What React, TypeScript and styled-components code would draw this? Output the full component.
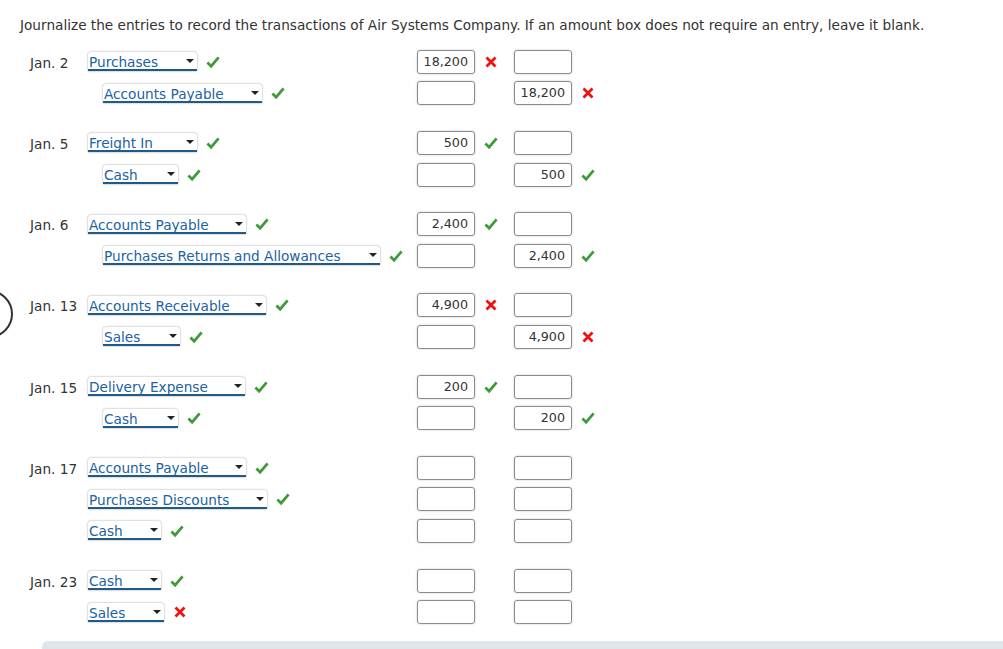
import React, { FC } from 'react';
import styled, { createGlobalStyle } from 'styled-components';

const GlobalStyle = createGlobalStyle`
	html, body {
		margin: 0;
		padding: 0;
		background: #fff;
		font-family: "DejaVu Sans", Verdana, sans-serif;
		color: #333;
		overflow: hidden;
	}
`;

const Page = styled.div`
	position: relative;
	width: 1003px;
	height: 649px;
	overflow: hidden;
	padding-top: 16px;
	box-sizing: border-box;
`;

const Instruction = styled.div`
	padding-left: 20px;
	font-size: 13.65px;
	line-height: 18px;
	color: #333;
`;

const Journal = styled.div`
	margin-top: 12px;
	padding-left: 30px;
`;

const Group = styled.div`
	margin-bottom: 18px;
`;

const Row = styled.div`
	display: grid;
	grid-template-columns: 58px 329px 97px 1fr;
	align-items: center;
	height: 31.6px;
`;

const DateCell = styled.div`
	font-size: 13.65px;
	color: #333;
	padding-top: 2px;
`;

const Cell = styled.div`
	display: flex;
	align-items: center;
`;

const Select = styled.div<{ $w: number; $indent: boolean }>`
	position: relative;
	width: ${(p) => p.$w}px;
	margin-left: ${(p) => (p.$indent ? 15 : 0)}px;
	height: 17px;
	background: #fff;
	border-radius: 3px 3px 0 0;
	box-shadow: 0 0 2px rgba(0, 0, 0, 0.45);
	border-bottom: 2.5px solid #1f5b8a;
	color: #2062a5;
	font-size: 13.65px;
	line-height: 20px;
	padding-left: 1px;
	box-sizing: content-box;
	white-space: nowrap;
	overflow: hidden;

	&:after {
		content: '';
		position: absolute;
		right: 3px;
		top: 7px;
		border-left: 4px solid transparent;
		border-right: 4px solid transparent;
		border-top: 4px solid #222;
	}
`;

const Amount = styled.div`
	width: 56px;
	height: 22px;
	border: 1px solid #8c8c8c;
	border-radius: 3px;
	box-shadow: 0 0 2px rgba(0, 0, 0, 0.25);
	font-size: 12.7px;
	line-height: 22px;
	text-align: right;
	color: #333;
	box-sizing: content-box;

	span {
		padding-right: 6px;
	}
`;

const MarkBox = styled.span`
	display: inline-flex;
	margin-left: 9px;
	width: 14px;
	height: 14px;
	align-items: center;
	justify-content: center;
`;

const BottomBar = styled.div`
	margin-left: 42px;
	margin-top: -5px;
	height: 20px;
	background: #dfe5e9;
	border-radius: 6px 0 0 0;
`;

const Circle = styled.div`
	position: absolute;
	left: -35px;
	top: 290px;
	width: 44px;
	height: 44px;
	border: 2.5px solid #333;
	border-radius: 50%;
`;

type MarkKind = 'ok' | 'x' | undefined;

const Mark: FC<{ kind: MarkKind }> = ({ kind }) => {
	if (!kind) return null;
	if (kind === 'ok')
		return (
			<MarkBox>
				<svg width="15" height="14" viewBox="0 0 15 14">
					<path d="M1.5 7.5 L5.5 11.5 L13.5 2" fill="none" stroke="#3f9a3a" strokeWidth="2.9" strokeLinejoin="miter" />
				</svg>
			</MarkBox>
		);
	return (
		<MarkBox>
			<svg width="12" height="12" viewBox="0 0 12 12">
				<path d="M1.5 1.5 L10.5 10.5 M10.5 1.5 L1.5 10.5" stroke="#ee1111" strokeWidth="2.8" />
			</svg>
		</MarkBox>
	);
};

type Line = {
	acct: string;
	w: number;
	indent?: boolean;
	mark: MarkKind;
	debit?: string;
	dmark?: MarkKind;
	credit?: string;
	cmark?: MarkKind;
};

type Entry = { date: string; lines: Line[] };

const entries: Entry[] = [
	{
		date: 'Jan. 2',
		lines: [
			{ acct: 'Purchases', w: 108, mark: 'ok', debit: '18,200', dmark: 'x' },
			{ acct: 'Accounts Payable', w: 158, indent: true, mark: 'ok', credit: '18,200', cmark: 'x' },
		],
	},
	{
		date: 'Jan. 5',
		lines: [
			{ acct: 'Freight In', w: 108, mark: 'ok', debit: '500', dmark: 'ok' },
			{ acct: 'Cash', w: 74, indent: true, mark: 'ok', credit: '500', cmark: 'ok' },
		],
	},
	{
		date: 'Jan. 6',
		lines: [
			{ acct: 'Accounts Payable', w: 157, mark: 'ok', debit: '2,400', dmark: 'ok' },
			{ acct: 'Purchases Returns and Allowances', w: 276, indent: true, mark: 'ok', credit: '2,400', cmark: 'ok' },
		],
	},
	{
		date: 'Jan. 13',
		lines: [
			{ acct: 'Accounts Receivable', w: 177, mark: 'ok', debit: '4,900', dmark: 'x' },
			{ acct: 'Sales', w: 76, indent: true, mark: 'ok', credit: '4,900', cmark: 'x' },
		],
	},
	{
		date: 'Jan. 15',
		lines: [
			{ acct: 'Delivery Expense', w: 156, mark: 'ok', debit: '200', dmark: 'ok' },
			{ acct: 'Cash', w: 74, indent: true, mark: 'ok', credit: '200', cmark: 'ok' },
		],
	},
	{
		date: 'Jan. 17',
		lines: [
			{ acct: 'Accounts Payable', w: 157, mark: 'ok' },
			{ acct: 'Purchases Discounts', w: 178, mark: 'ok' },
			{ acct: 'Cash', w: 72, mark: 'ok' },
		],
	},
	{
		date: 'Jan. 23',
		lines: [
			{ acct: 'Cash', w: 72, mark: 'ok' },
			{ acct: 'Sales', w: 75, mark: 'x' },
		],
	},
];

const App: FC = () => (
	<Page>
		<GlobalStyle />
		<Instruction>
			Journalize the entries to record the transactions of Air Systems Company. If an amount box does not require an entry, leave it blank.
		</Instruction>
		<Journal>
			{entries.map((e) => (
				<Group key={e.date}>
					{e.lines.map((l, i) => (
						<Row key={i}>
							<DateCell>{i === 0 ? e.date : ''}</DateCell>
							<Cell>
								<Select $w={l.w} $indent={!!l.indent}>
									{l.acct}
								</Select>
								<Mark kind={l.mark} />
							</Cell>
							<Cell>
								<Amount>{l.debit && <span>{l.debit}</span>}</Amount>
								<Mark kind={l.dmark} />
							</Cell>
							<Cell>
								<Amount>{l.credit && <span>{l.credit}</span>}</Amount>
								<Mark kind={l.cmark} />
							</Cell>
						</Row>
					))}
				</Group>
			))}
		</Journal>
		<BottomBar />
		<Circle />
	</Page>
);

export default App;
